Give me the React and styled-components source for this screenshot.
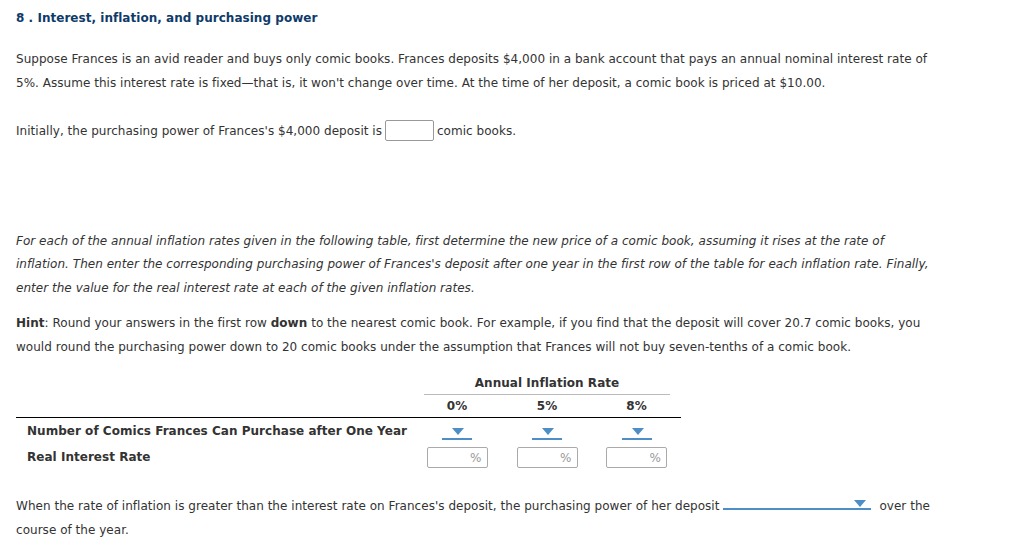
import React from "react";
import styled, { createGlobalStyle } from "styled-components";

const Global = createGlobalStyle`
  html, body { margin: 0; padding: 0; background: #fff; }
  body { font-family: "DejaVu Sans", Verdana, sans-serif; font-size: 12px; color: #333; letter-spacing: 0.03px; }
`;

const Page = styled.div`
  padding: 6px 16px 0 16px;
  width: 1029px;
  box-sizing: border-box;
`;

const Title = styled.h2`
  margin: 0 0 18px 0;
  font-size: 12px;
  line-height: 24px;
  font-weight: bold;
  color: #0e3b69;
`;

const Para = styled.p`
  margin: ${(p) => p.$mt || 0}px 0 0 0;
  line-height: 23.5px;
  font-style: ${(p) => (p.$italic ? "italic" : "normal")};
  width: ${(p) => p.$w || 920}px;
`;

const InlineRow = styled.div`
  margin-top: ${(p) => p.$mt || 0}px;
  display: flex;
  align-items: center;
  height: 24px;
  gap: 3px;
`;

const BlankInput = styled.span`
  display: inline-block;
  width: 49px;
  height: 21px;
  box-sizing: border-box;
  border: 1px solid #999;
  border-radius: 2px;
  background: #fff;
`;

const Table = styled.div`
  margin-top: 12px;
  display: grid;
  grid-template-columns: 396px 90px 90px 89px;
  width: 665px;
`;

const GroupHead = styled.div`
  grid-column: 2 / 5;
  margin: 0 11px 0 12px;
  height: 23px;
  display: flex;
  align-items: center;
  justify-content: center;
  font-weight: bold;
  border-bottom: 1px solid #bbb;
`;

const HeadRow = styled.div`
  grid-column: 1 / 5;
  display: grid;
  grid-template-columns: subgrid;
  border-bottom: 1px solid #000;
  height: 22px;
  align-items: center;
`;

const ColHead = styled.div`
  text-align: center;
  font-weight: bold;
`;

const Label = styled.div`
  padding-left: 11px;
  font-weight: bold;
  height: ${(p) => p.$h}px;
  display: flex;
  align-items: center;
`;

const Cell = styled.div`
  height: ${(p) => p.$h}px;
  display: flex;
  align-items: center;
  justify-content: center;
`;

const Dropdown = styled.span`
  position: relative;
  display: inline-block;
  width: ${(p) => p.$w}px;
  height: ${(p) => p.$h || 16}px;
  margin: 0 ${(p) => p.$mr || 0}px 0 ${(p) => p.$ml || 0}px;
  border-bottom: 2px solid #4d8ec6;
  box-sizing: border-box;
  vertical-align: baseline;
  &::after {
    content: "";
    position: absolute;
    right: ${(p) => p.$tr}px;
    top: ${(p) => p.$tt || 3}px;
    border-left: 6.5px solid transparent;
    border-right: 6.5px solid transparent;
    border-top: 7px solid #4d8ec6;
  }
`;

const PctInput = styled.span`
  display: inline-flex;
  align-items: center;
  justify-content: flex-end;
  width: 61px;
  height: 21px;
  box-sizing: border-box;
  border: 1px solid #aaa;
  border-radius: 2px;
  padding-right: 5px;
  color: #999;
  margin-top: 1px;
`;

const Final = styled.p`
  margin: 24px 0 0 0;
  line-height: 24px;
  width: 920px;
`;

export default function App() {
  return (
    <Page>
      <Global />
      <Title>8 . Interest, inflation, and purchasing power</Title>
      <Para>
        Suppose Frances is an avid reader and buys only comic books. Frances deposits $4,000 in a bank account that pays an annual nominal interest rate of 5%. Assume this interest rate is fixed—that is, it won't change over time. At the time of her deposit, a comic book is priced at $10.00.
      </Para>
      <InlineRow $mt={23.5}>
        <span>Initially, the purchasing power of Frances's $4,000 deposit is</span>
        <BlankInput />
        <span>comic books.</span>
      </InlineRow>
      <Para $italic $mt={87}>
        For each of the annual inflation rates given in the following table, first determine the new price of a comic book, assuming it rises at the rate of inflation. Then enter the corresponding purchasing power of Frances's deposit after one year in the first row of the table for each inflation rate. Finally, enter the value for the real interest rate at each of the given inflation rates.
      </Para>
      <Para $mt={12}>
        <b>Hint</b>: Round your answers in the first row <b>down</b> to the nearest comic book. For example, if you find that the deposit will cover 20.7 comic books, you would round the purchasing power down to 20 comic books under the assumption that Frances will not buy seven-tenths of a comic book.
      </Para>
      <Table>
        <div />
        <GroupHead>Annual Inflation Rate</GroupHead>
        <HeadRow>
          <div />
          <ColHead>0%</ColHead>
          <ColHead>5%</ColHead>
          <ColHead>8%</ColHead>
        </HeadRow>
        <Label $h={26}>Number of Comics Frances Can Purchase after One Year</Label>
        {[0, 1, 2].map((i) => (
          <Cell key={"d" + i} $h={26}>
            <Dropdown $w={30} $h={17} $tr={8} $tt={5} />
          </Cell>
        ))}
        <Label $h={26}>Real Interest Rate</Label>
        {[0, 1, 2].map((i) => (
          <Cell key={"p" + i} $h={26}>
            <PctInput>%</PctInput>
          </Cell>
        ))}
      </Table>
      <Final>
        When the rate of inflation is greater than the interest rate on Frances's deposit, the purchasing power of her deposit
        <Dropdown $w={148} $h={15} $tr={5} $tt={5} $ml={4} $mr={8} />over the course of the year.
      </Final>
    </Page>
  );
}
